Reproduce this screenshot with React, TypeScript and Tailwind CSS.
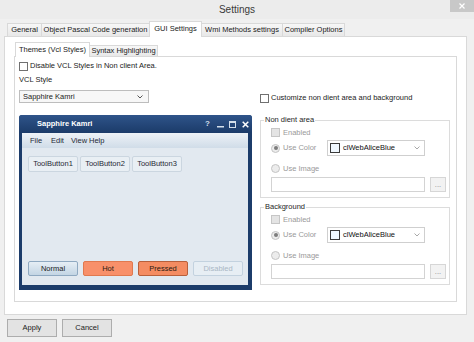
import React from 'react';

const Check = ({ disabled }: { disabled?: boolean }) => (
  <span
    className={
      disabled
        ? 'w-[9px] h-[9px] shrink-0 border border-[#c6c6c6] bg-[#e4e4e4]'
        : 'w-[9px] h-[9px] shrink-0 border border-[#707070] bg-white'
    }
  />
);

const Radio = ({ checked }: { checked?: boolean }) => (
  <span className="w-[9px] h-[9px] shrink-0 rounded-full border border-[#c4c4c4] bg-[#ececec] flex items-center justify-center">
    {checked && <span className="w-[4px] h-[4px] rounded-full bg-[#7d7d7d]" />}
  </span>
);

const Chevron = ({ color = '#8a8a8a' }: { color?: string }) => (
  <svg width="6" height="4" viewBox="0 0 6 4" className="shrink-0">
    <path d="M0.5 0.5L3 3L5.5 0.5" stroke={color} strokeWidth="1" fill="none" />
  </svg>
);

const Group = ({ title }: { title: string }) => (
  <div className="h-[78px] border border-[#dcdcdc]">
    <div className="-mt-[6px] ml-[3px] px-[1px] w-fit h-[10px] flex items-center bg-white text-[#1e1e1e]">
      {title}
    </div>
    <div className="pl-[10px] pr-[3px] text-[#9a9a9a]">
      <div className="mt-[3px] h-[9px] flex items-center gap-[3px]">
        <Check disabled />
        <span>Enabled</span>
      </div>
      <div className="mt-[3px] h-[16px] flex items-center">
        <Radio checked />
        <span className="ml-[3px] w-[44px]">Use Color</span>
        <div className="w-[98px] h-[16px] border border-[#cfcfcf] bg-white flex items-center pl-[2px] pr-[4px]">
          <span className="w-[10px] h-[10px] shrink-0 border border-[#3a3a3a] bg-[#f0f8ff]" />
          <span className="ml-[3px] text-[#111111]">clWebAliceBlue</span>
          <span className="ml-auto">
            <Chevron color="#a8a8a8" />
          </span>
        </div>
      </div>
      <div className="mt-[8px] h-[9px] flex items-center gap-[3px]">
        <Radio />
        <span>Use Image</span>
      </div>
      <div className="mt-[4px] h-[15px] flex gap-[5px]">
        <div className="w-[154px] h-[15px] border border-[#d3d3d3] bg-white" />
        <div className="w-[16px] h-[15px] border border-[#d6d6d6] bg-[#f2f2f2] flex items-end justify-center pb-[3px] text-[#8a8a8a]">
          ...
        </div>
      </div>
    </div>
  </div>
);

const outerTabs = [
  { label: 'General', cls: 'w-[35px]' },
  { label: 'Object Pascal Code generation', cls: 'w-[109px]' },
  { label: 'GUI Settings', cls: 'w-[53px]', active: true },
  { label: 'Wmi Methods settings', cls: 'w-[82px]' },
  { label: 'Compiler Options', cls: 'w-[63px]' },
];

const states = [
  { label: 'Normal', cls: 'border-[#8fa9c1] bg-gradient-to-b from-[#e6eef5] to-[#c3d5e4] text-[#1a1a1a]' },
  { label: 'Hot', cls: 'border-[#e0794f] bg-[#f8906a] text-[#2a1a12]' },
  { label: 'Pressed', cls: 'border-[#b8603c] bg-[#f48c62] text-[#2a1a12]' },
  { label: 'Disabled', cls: 'border-[#c3d2df] bg-[#e7eef4] text-[#a9b7c4]' },
];

export default function App() {
  return (
    <div className="w-[474px] h-[342px] bg-[#f0f0f0] flex flex-col overflow-hidden font-['Liberation_Sans',Arial,sans-serif] text-[7.5px] leading-none text-[#1b1b1b]">
      {/* title bar */}
      <div className="relative h-[19px] shrink-0 flex items-center justify-center bg-[#ececec]">
        <span className="text-[10px] text-[#3a3a3a]">Settings</span>
        <div className="absolute right-0 top-0 w-[24px] h-[12px] bg-[#c8c8c8] flex items-center justify-center">
          <svg width="6" height="6" viewBox="0 0 6 6">
            <path d="M0.5 0.5L5.5 5.5M5.5 0.5L0.5 5.5" stroke="#ffffff" strokeWidth="1.2" />
          </svg>
        </div>
      </div>

      <div className="pl-[4px] shrink-0">
        <div className="w-[463px]">
          {/* main tabs */}
          <div className="h-[17px] flex items-end pl-[3px]">
            {outerTabs.map((t, i) =>
              t.active ? (
                <div
                  key={t.label}
                  className={`${t.cls} relative z-10 -ml-px -mb-px h-[16px] border border-b-0 border-[#d9d9d9] bg-white flex items-center justify-center pb-[2px]`}
                >
                  {t.label}
                </div>
              ) : (
                <div
                  key={t.label}
                  className={`${t.cls} ${i === 0 ? '' : '-ml-px'} h-[13px] border border-b-0 border-[#d9d9d9] bg-gradient-to-b from-[#f7f7f7] to-[#e8e8e8] flex items-center justify-center`}
                >
                  {t.label}
                </div>
              )
            )}
          </div>

          {/* main page */}
          <div className="h-[279px] border border-[#d9d9d9] bg-white pl-[9px] pt-[5px]">
            <div className="h-[14px] flex items-end pl-[1px]">
              <div className="relative z-10 -mb-px w-[75px] h-[15px] border border-b-0 border-[#d9d9d9] bg-white flex items-center justify-center pb-[1px]">
                Themes (Vcl Styles)
              </div>
              <div className="-ml-px w-[69px] h-[11px] border border-b-0 border-[#d9d9d9] bg-gradient-to-b from-[#f7f7f7] to-[#e8e8e8] flex items-center justify-center">
                Syntax Highlighting
              </div>
            </div>

            <div className="w-[443px] h-[246px] border border-[#d9d9d9] bg-white flex pl-[4px]">
              {/* left column */}
              <div className="w-[233px] flex flex-col">
                <div className="mt-[4px] h-[10px] flex items-center gap-[2px]">
                  <Check />
                  <span>Disable VCL Styles in Non client Area.</span>
                </div>
                <div className="mt-[4px] h-[10px] flex items-center">VCL Style</div>
                <div className="mt-[5px] w-[130px] h-[13px] border border-[#bdbdbd] bg-[#f7f7f7] flex items-center pl-[3px] pr-[5px]">
                  <span>Sapphire Kamri</span>
                  <span className="ml-auto">
                    <Chevron color="#555555" />
                  </span>
                </div>

                {/* preview window */}
                <div className="mt-[12px] w-[233px] h-[175px] flex flex-col bg-[#1c3c6a] rounded-t-[3px]">
                  <div className="h-[18px] shrink-0 flex items-center pl-[18px] rounded-t-[3px] bg-gradient-to-b from-[#2f548a] to-[#1b3b69]">
                    <span className="font-bold text-white">Sapphire Kamri</span>
                    <span className="ml-auto font-bold text-[8px] text-[#d4dfeb]">?</span>
                    <svg width="7" height="7" viewBox="0 0 7 7" className="ml-[7px]">
                      <rect x="0" y="5" width="7" height="1.5" fill="#d4dfeb" />
                    </svg>
                    <svg width="7" height="7" viewBox="0 0 7 7" className="ml-[5px]">
                      <rect x="0.5" y="0.5" width="6" height="6" stroke="#d4dfeb" strokeWidth="1" fill="none" />
                      <rect x="0.5" y="0.5" width="6" height="1.5" fill="#d4dfeb" />
                    </svg>
                    <svg width="7" height="7" viewBox="0 0 7 7" className="ml-[6px] mr-[3px]">
                      <path d="M0.7 0.7L6.3 6.3M6.3 0.7L0.7 6.3" stroke="#ffffff" strokeWidth="1.5" />
                    </svg>
                  </div>
                  <div className="flex-1 ml-[3px] mr-[4px] mb-[5px] flex flex-col bg-[#e2e9f0]">
                    <div className="h-[15px] shrink-0 flex items-center pl-[8px] bg-gradient-to-b from-[#edf2f7] to-[#d0dce8] text-[#1e2835]">
                      <span className="w-[21px]">File</span>
                      <span className="w-[20px]">Edit</span>
                      <span className="w-[18px]">View</span>
                      <span>Help</span>
                    </div>
                    <div className="flex-1 flex flex-col pl-[6px] pt-[8px] pb-[9px]">
                      <div className="flex gap-[2px]">
                        {['ToolButton1', 'ToolButton2', 'ToolButton3'].map((b) => (
                          <div
                            key={b}
                            className="w-[50px] h-[16px] rounded-[2px] border border-[#cbd6e0] bg-[#e9eff4] flex items-center justify-center text-[#1e2835]"
                          >
                            {b}
                          </div>
                        ))}
                      </div>
                      <div className="mt-auto flex gap-[5px]">
                        {states.map((s) => (
                          <div
                            key={s.label}
                            className={`${s.cls} w-[50px] h-[15px] rounded-[2px] border flex items-center justify-center`}
                          >
                            {s.label}
                          </div>
                        ))}
                      </div>
                    </div>
                  </div>
                </div>
              </div>

              {/* right column */}
              <div className="ml-[8px] w-[190px] flex flex-col">
                <div className="mt-[36px] h-[10px] flex items-center gap-[2px]">
                  <Check />
                  <span>Customize non dient area and background</span>
                </div>
                <div className="mt-[17px]">
                  <Group title="Non dient area" />
                </div>
                <div className="mt-[9px]">
                  <Group title="Background" />
                </div>
              </div>
            </div>
          </div>
        </div>
      </div>

      {/* bottom buttons */}
      <div className="flex gap-[5px] pl-[7px] pt-[4px]">
        <div className="w-[50px] h-[18px] border border-[#adadad] bg-[#e3e3e3] flex items-center justify-center">
          Apply
        </div>
        <div className="w-[50px] h-[18px] border border-[#adadad] bg-[#e3e3e3] flex items-center justify-center">
          Cancel
        </div>
      </div>
    </div>
  );
}
